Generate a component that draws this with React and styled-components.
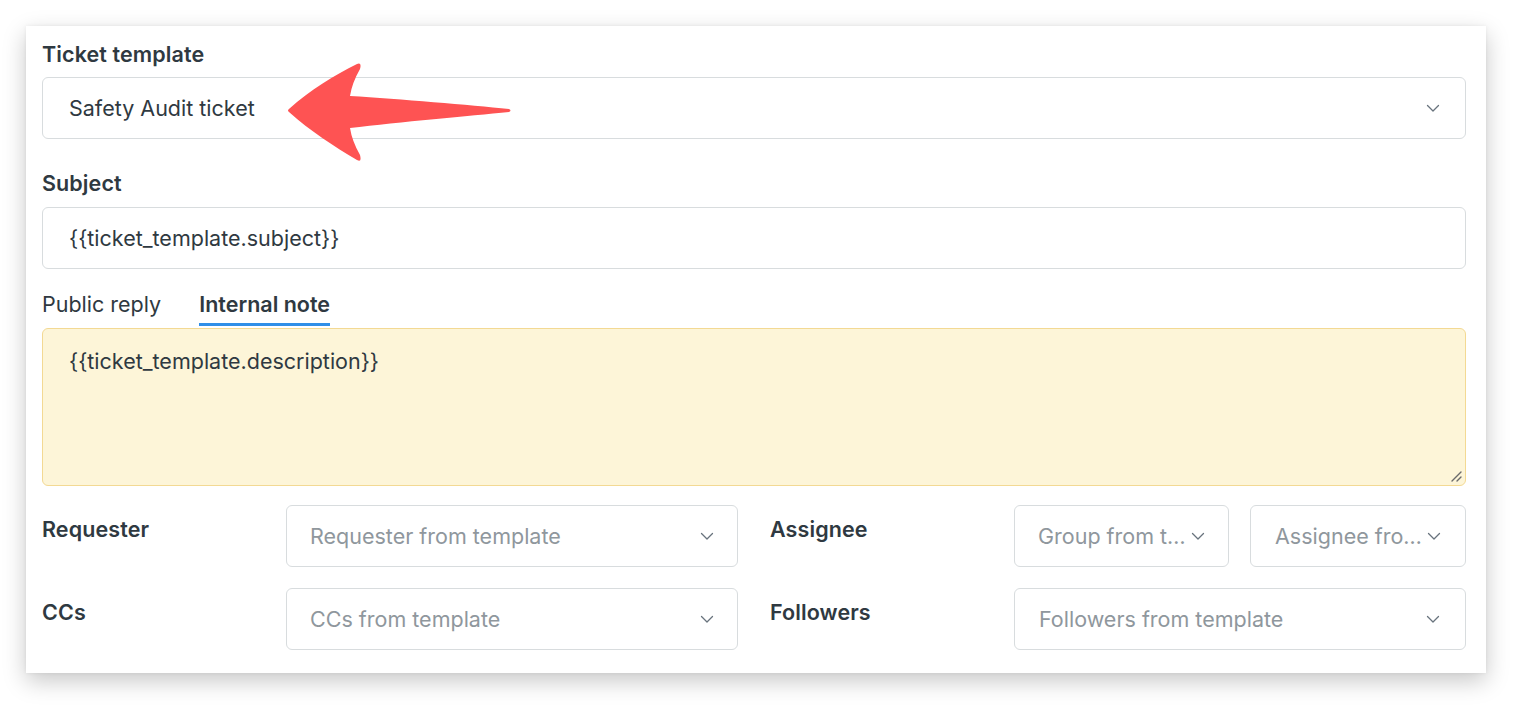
import React from "react";
import styled, { createGlobalStyle } from "styled-components";

const GlobalStyle = createGlobalStyle`
  html, body {
    margin: 0;
    padding: 0;
    background: #ffffff;
  }
  body {
    font-family: Inter, "Noto Sans", "Liberation Sans", sans-serif;
    color: #2f3941;
  }
`;

const Page = styled.div`
  padding: 26px 40px 40px 26px;
`;

const Card = styled.div`
  position: relative;
  width: 1460px;
  box-sizing: border-box;
  background: #fff;
  padding: 16px 20px 23px 16px;
  box-shadow: 0 8px 22px rgba(0, 0, 0, 0.22), 0 0 4px rgba(0, 0, 0, 0.06);
`;

const Label = styled.div`
  font-size: 21.5px;
  line-height: 24px;
  font-weight: 600;
  color: #2f3941;
  letter-spacing: 0.1px;
  margin-top: ${(p) => p.$top || 0}px;
  margin-bottom: ${(p) => p.$bottom || 12}px;
`;

const Field = styled.div`
  height: 62px;
  box-sizing: border-box;
  border: 1px solid #d8dcde;
  border-radius: 6px;
  background: #fff;
  display: flex;
  align-items: center;
  gap: 4px;
  padding: 0 ${(p) => p.$padRight || 26}px 0 ${(p) => p.$padLeft || 26}px;
  font-size: 21.5px;
  color: ${(p) => (p.$placeholder ? "#8f979d" : "#2f3941")};
  min-width: 0;
`;

const FieldText = styled.span`
  flex: ${(p) => (p.$tight ? "0 0 auto" : "1")};
  min-width: 0;
  white-space: nowrap;
  line-height: 28px;
`;

const Tabs = styled.div`
  display: flex;
  gap: 38px;
  margin-top: 17px;
  height: 42px;
`;

const Tab = styled.div`
  font-size: 21.5px;
  line-height: 36px;
  font-weight: ${(p) => (p.$active ? 600 : 400)};
  color: #2f3941;
  border-bottom: 3px solid ${(p) => (p.$active ? "#2f8fe8" : "transparent")};
  box-sizing: border-box;
  height: 40px;
`;

const NoteArea = styled.div`
  position: relative;
  height: 158px;
  box-sizing: border-box;
  background: #fdf5d8;
  border: 1px solid #f3d993;
  border-radius: 6px;
  padding: 19px 26px;
  font-size: 21.5px;
  line-height: 26px;
  color: #2f3941;
`;

const Grip = styled.svg`
  position: absolute;
  right: 2px;
  bottom: 2px;
`;

const PeopleGrid = styled.div`
  display: grid;
  grid-template-columns: 244px 452px 276px 452px;
  row-gap: 21px;
  margin-top: 19px;
`;

const RowLabel = styled.div`
  font-size: 21.5px;
  line-height: 24px;
  font-weight: 600;
  letter-spacing: 0.1px;
  color: #2f3941;
  padding-top: 12px;
  padding-left: ${(p) => (p.$indent ? 32 : 0)}px;
`;

const Pair = styled.div`
  display: grid;
  grid-template-columns: 215px 216px;
  column-gap: 21px;
`;

const ArrowMark = styled.svg`
  position: absolute;
  left: 254px;
  top: 29px;
`;

const Chevron = () => (
  <svg width="16" height="16" viewBox="0 0 16 16" fill="none" style={{ flexShrink: 0 }}>
    <path d="M2.5 5.5l5.5 5.5 5.5-5.5" stroke="#68737d" strokeWidth="1.3" strokeLinecap="round" strokeLinejoin="round" />
  </svg>
);

const Select = ({ children, placeholder, padRight, padLeft, tight }) => (
  <Field $placeholder={placeholder} $padRight={padRight} $padLeft={padLeft}>
    <FieldText $tight={tight}>{children}</FieldText>
    <Chevron />
  </Field>
);

export default function App() {
  return (
    <>
      <GlobalStyle />
      <Page>
        <Card>
          <Label $bottom={11}>Ticket template</Label>
          <Select padRight={24}>Safety Audit ticket</Select>

          <Label $top={32}>Subject</Label>
          <Field>
            <FieldText>{"{{ticket_template.subject}}"}</FieldText>
          </Field>

          <Tabs>
            <Tab>Public reply</Tab>
            <Tab $active>Internal note</Tab>
          </Tabs>
          <NoteArea>
            {"{{ticket_template.description}}"}
            <Grip width="14" height="14" viewBox="0 0 14 14">
              <path d="M12 3L3 12M12 8L8 12" stroke="#6b6b6b" strokeWidth="1.4" strokeLinecap="round" />
            </Grip>
          </NoteArea>

          <PeopleGrid>
            <RowLabel>Requester</RowLabel>
            <Select placeholder padRight={22} padLeft={23}>Requester from template</Select>
            <RowLabel $indent>Assignee</RowLabel>
            <Pair>
              <Select placeholder tight padLeft={23}>Group from t…</Select>
              <Select placeholder tight padLeft={24}>Assignee fro…</Select>
            </Pair>

            <RowLabel>CCs</RowLabel>
            <Select placeholder padRight={22} padLeft={23}>CCs from template</Select>
            <RowLabel $indent>Followers</RowLabel>
            <Select placeholder padRight={24} padLeft={24}>Followers from template</Select>
          </PeopleGrid>

          <ArrowMark width="240" height="116" viewBox="0 0 240 116">
            <path
              d="M9,54 C30,35 55,20 77,9 Q82,7 80,14 Q72,28 70,41 C120,44 190,50 229,54 Q232,55.5 229,57 C190,61 120,67 70,73 Q72,86 80,100 Q82,108 77,105 C55,92 30,76 9,57 Q7,55.5 9,54 Z"
              fill="#fe5353"
            />
          </ArrowMark>
        </Card>
      </Page>
    </>
  );
}
